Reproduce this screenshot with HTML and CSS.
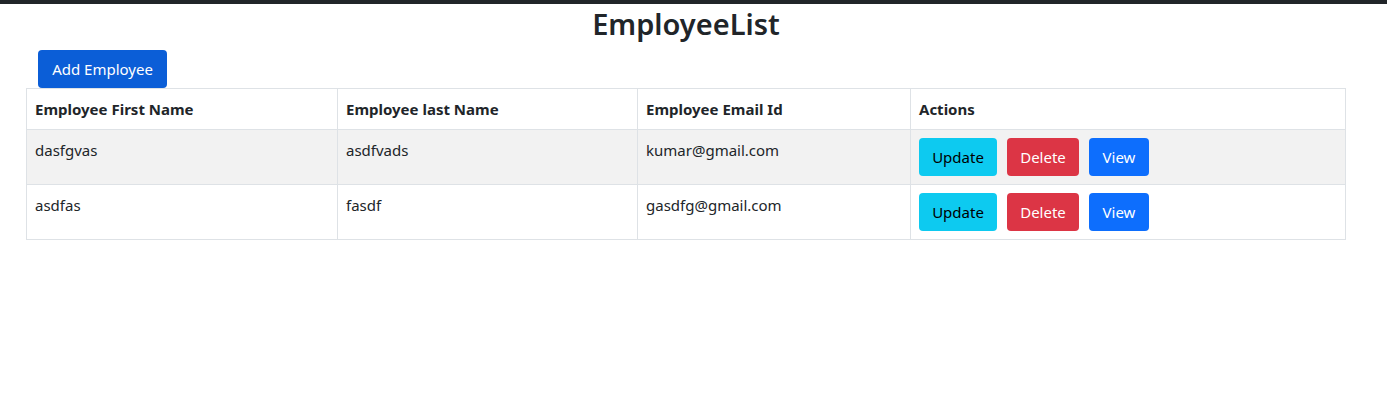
FILE: index.html
```html
<!DOCTYPE html>
<html lang="en">
<head>
<meta charset="utf-8">
<title>EmployeeList</title>
<link rel="stylesheet" href="styles.css">
</head>
<body>
<div class="topbar"></div>
<div class="page">
  <h2 class="title">EmployeeList</h2>
  <div class="toolbar">
    <button class="btn btn-primary btn-add">Add Employee</button>
  </div>
  <table class="table">
    <thead>
      <tr>
        <th class="c1">Employee First Name</th>
        <th class="c2">Employee last Name</th>
        <th class="c3">Employee Email Id</th>
        <th class="c4">Actions</th>
      </tr>
    </thead>
    <tbody>
      <tr class="striped">
        <td>dasfgvas</td>
        <td>asdfvads</td>
        <td>kumar@gmail.com</td>
        <td><div class="actions"><button class="btn btn-info">Update</button><button class="btn btn-danger">Delete</button><button class="btn btn-view">View</button></div></td>
      </tr>
      <tr>
        <td>asdfas</td>
        <td>fasdf</td>
        <td>gasdfg@gmail.com</td>
        <td><div class="actions"><button class="btn btn-info">Update</button><button class="btn btn-danger">Delete</button><button class="btn btn-view">View</button></div></td>
      </tr>
    </tbody>
  </table>
</div>
</body>
</html>
```

FILE: styles.css
```css
* { box-sizing: border-box; }
body {
  margin: 0;
  font-family: "Noto Sans", "Open Sans", sans-serif;
  font-size: 15px;
  color: #212529;
  background: #fff;
}
.topbar {
  height: 4px;
  background: #212529;
}
.page {
  padding: 0 41px 0 26px;
}
.title {
  margin: 0;
  text-align: center;
  font-size: 29px;
  font-weight: 600;
  line-height: 40px;
  color: #212529;
}
.toolbar {
  padding: 6px 12px 0;
  height: 44px;
}
.btn {
  font-family: inherit;
  font-size: 15px;
  line-height: 24px;
  padding: 6px 12px;
  border: 1px solid transparent;
  border-radius: 4px;
  cursor: pointer;
}
.btn-add {
  background: #0b5ed7;
  color: #fff;
  height: 38px;
  width: 129px;
  padding: 0;
}
.table {
  width: 1320px;
  border-collapse: collapse;
  border: 1px solid #dee2e6;
}
.table th, .table td {
  border: 1px solid #dee2e6;
  padding: 8px;
  text-align: left;
  vertical-align: top;
  line-height: 24px;
}
.table th { font-weight: 700; }
.c1 { width: 311px; }
.c2 { width: 300px; }
.c3 { width: 273px; }
.striped td { background: #f2f2f2; }
.actions {
  display: flex;
  gap: 10px;
}
.actions .btn { height: 38px; padding: 0; }
.btn-info { background: #0dcaf0; color: #000; width: 78px; }
.btn-danger { background: #dc3545; color: #fff; width: 72px; }
.btn-view { background: #0d6efd; color: #fff; width: 60px; }
```
